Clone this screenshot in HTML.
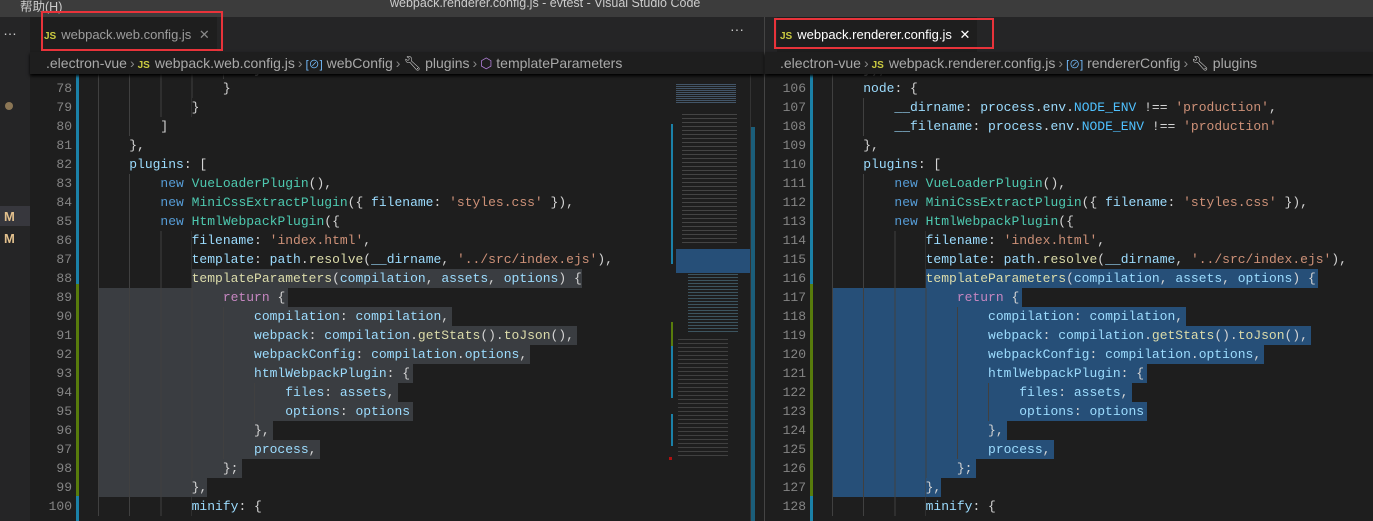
<!DOCTYPE html>
<html><head><meta charset="utf-8">
<style>
*{margin:0;padding:0;box-sizing:border-box}
body{width:1373px;height:521px;overflow:hidden;background:#1e1e1e;position:relative;font-family:"Liberation Sans","Noto Sans CJK SC",sans-serif}
.abs{position:absolute}
#title{left:0;top:0;width:1373px;height:17px;background:#3c3c3c;color:#ccc;font-size:12.5px;overflow:hidden}
#title span{position:absolute;top:-4px}
.tabrow{top:17px;height:35px;background:#252526}
.bc{top:52px;height:22px;background:#1e1e1e;color:#a9a9a9;font-size:14px;line-height:22px;white-space:nowrap;box-shadow:0 2px 3px #000;z-index:5}
.bc .js,.tab .js{color:#cbcb41;font-weight:bold;font-size:10px;margin-right:5px}
.tab{top:0;height:35px;line-height:35px;font-size:13px;white-space:nowrap;background:#1e1e1e}
.red{border:2px solid #e8333a;z-index:6}
.code{top:60px;font-family:"Liberation Mono",monospace;font-size:13px;color:#d4d4d4;z-index:1}
.l{height:19px;line-height:19px;position:relative;white-space:pre}
.ln{position:absolute;width:40px;text-align:right;color:#858585}
.g{position:absolute;top:0;height:19px;background:repeating-linear-gradient(to right,#404040 0 1px,transparent 1px 4ch)}
.s{position:absolute;top:0;height:19px}
.t{position:absolute;top:0}
.p{color:#9cdcfe}.f{color:#dcdcaa}.c{color:#4ec9b0}.st{color:#ce9178}.k{color:#569cd6}.r{color:#c586c0}.n{color:#4fc1ff}
.sep{color:#888;margin:0 3px}
</style></head><body>
<div id="title" class="abs"><span style="left:20px">帮助(H)</span><span style="left:390px">webpack.renderer.config.js - evtest - Visual Studio Code</span></div>

<div class="abs" style="left:0;top:17px;width:30px;height:504px;background:#252526"></div>
<div class="abs" style="left:3px;top:22px;color:#ccc;font-size:14px">…</div>
<div class="abs" style="left:5px;top:102px;width:8px;height:8px;border-radius:50%;background:#8b7655"></div>
<div class="abs" style="left:0;top:206px;width:30px;height:20px;background:#37373d"></div>
<div class="abs" style="left:4px;top:209px;color:#e2c08d;font-size:13px;font-weight:bold">M</div>
<div class="abs" style="left:4px;top:231px;color:#e2c08d;font-size:13px;font-weight:bold">M</div>

<div class="abs tabrow" style="left:30px;width:734px">
  <div class="abs tab" style="left:0;width:187px;padding-left:14px;color:#9d9d9d"><span class="js">JS</span>webpack.web.config.js <span style="margin-left:4px;color:#8a8a8a">✕</span></div>
  <div class="abs" style="left:700px;top:4px;color:#ccc;font-size:14px">···</div>
</div>
<div class="abs red" style="left:41px;top:11px;width:182px;height:40px"></div>
<div class="abs bc" style="left:30px;width:734px;padding-left:16px">.electron-vue<span class="sep">›</span><span class="js">JS</span>webpack.web.config.js<span class="sep">›</span><span style="color:#75beff;font-size:11px">[⊘]</span> webConfig<span class="sep">›</span><span style="color:#ccc">🔧︎</span> plugins<span class="sep">›</span><span style="color:#b180d7">⬡</span> templateParameters</div>

<div class="abs" style="left:76px;top:74px;width:3px;height:210px;background:#1b81a8;z-index:2"></div>
<div class="abs" style="left:76px;top:284px;width:3px;height:212px;background:#587c0c;z-index:2"></div>
<div class="abs" style="left:76px;top:496px;width:3px;height:25px;background:#1b81a8;z-index:2"></div>

<div class="abs code" style="left:0;width:668px;overflow:hidden;height:461px">
<div class="l"><span class="ln" style="left:32px">77</span><div class="g" style="left:98px;width:20ch"></div><span class="t" style="left:98px">                    }</span></div>
<div class="l"><span class="ln" style="left:32px">78</span><div class="g" style="left:98px;width:16ch"></div><span class="t" style="left:98px">                }</span></div>
<div class="l"><span class="ln" style="left:32px">79</span><div class="g" style="left:98px;width:12ch"></div><span class="t" style="left:98px">            }</span></div>
<div class="l"><span class="ln" style="left:32px">80</span><div class="g" style="left:98px;width:8ch"></div><span class="t" style="left:98px">        ]</span></div>
<div class="l"><span class="ln" style="left:32px">81</span><div class="g" style="left:98px;width:4ch"></div><span class="t" style="left:98px">    },</span></div>
<div class="l"><span class="ln" style="left:32px">82</span><div class="g" style="left:98px;width:4ch"></div><span class="t" style="left:98px">    <span class="p">plugins</span>: [</span></div>
<div class="l"><span class="ln" style="left:32px">83</span><div class="g" style="left:98px;width:8ch"></div><span class="t" style="left:98px">        <span class="k">new</span> <span class="c">VueLoaderPlugin</span>(),</span></div>
<div class="l"><span class="ln" style="left:32px">84</span><div class="g" style="left:98px;width:8ch"></div><span class="t" style="left:98px">        <span class="k">new</span> <span class="c">MiniCssExtractPlugin</span>({ <span class="p">filename</span>: <span class="st">'styles.css'</span> }),</span></div>
<div class="l"><span class="ln" style="left:32px">85</span><div class="g" style="left:98px;width:8ch"></div><span class="t" style="left:98px">        <span class="k">new</span> <span class="c">HtmlWebpackPlugin</span>({</span></div>
<div class="l"><span class="ln" style="left:32px">86</span><div class="g" style="left:98px;width:12ch"></div><span class="t" style="left:98px">            <span class="p">filename</span>: <span class="st">'index.html'</span>,</span></div>
<div class="l"><span class="ln" style="left:32px">87</span><div class="g" style="left:98px;width:12ch"></div><span class="t" style="left:98px">            <span class="p">template</span>: <span class="p">path</span>.<span class="f">resolve</span>(<span class="p">__dirname</span>, <span class="st">'../src/index.ejs'</span>),</span></div>
<div class="l"><span class="ln" style="left:32px">88</span><div class="g" style="left:98px;width:12ch"></div><div class="s" style="left:calc(98px + 12ch);width:50ch;background:#3a3d41"></div><span class="t" style="left:98px">            <span class="f">templateParameters</span>(<span class="p">compilation</span>, <span class="p">assets</span>, <span class="p">options</span>) {</span></div>
<div class="l"><span class="ln" style="left:32px">89</span><div class="s" style="left:98px;width:24.4ch;background:#3a3d41"></div><div class="g" style="left:98px;width:16ch"></div><span class="t" style="left:98px">                <span class="r">return</span> {</span></div>
<div class="l"><span class="ln" style="left:32px">90</span><div class="s" style="left:98px;width:45.4ch;background:#3a3d41"></div><div class="g" style="left:98px;width:20ch"></div><span class="t" style="left:98px">                    <span class="p">compilation</span>: <span class="p">compilation</span>,</span></div>
<div class="l"><span class="ln" style="left:32px">91</span><div class="s" style="left:98px;width:61.4ch;background:#3a3d41"></div><div class="g" style="left:98px;width:20ch"></div><span class="t" style="left:98px">                    <span class="p">webpack</span>: <span class="p">compilation</span>.<span class="f">getStats</span>().<span class="f">toJson</span>(),</span></div>
<div class="l"><span class="ln" style="left:32px">92</span><div class="s" style="left:98px;width:55.4ch;background:#3a3d41"></div><div class="g" style="left:98px;width:20ch"></div><span class="t" style="left:98px">                    <span class="p">webpackConfig</span>: <span class="p">compilation</span>.<span class="p">options</span>,</span></div>
<div class="l"><span class="ln" style="left:32px">93</span><div class="s" style="left:98px;width:40.4ch;background:#3a3d41"></div><div class="g" style="left:98px;width:20ch"></div><span class="t" style="left:98px">                    <span class="p">htmlWebpackPlugin</span>: {</span></div>
<div class="l"><span class="ln" style="left:32px">94</span><div class="s" style="left:98px;width:38.4ch;background:#3a3d41"></div><div class="g" style="left:98px;width:24ch"></div><span class="t" style="left:98px">                        <span class="p">files</span>: <span class="p">assets</span>,</span></div>
<div class="l"><span class="ln" style="left:32px">95</span><div class="s" style="left:98px;width:40.4ch;background:#3a3d41"></div><div class="g" style="left:98px;width:24ch"></div><span class="t" style="left:98px">                        <span class="p">options</span>: <span class="p">options</span></span></div>
<div class="l"><span class="ln" style="left:32px">96</span><div class="s" style="left:98px;width:22.4ch;background:#3a3d41"></div><div class="g" style="left:98px;width:20ch"></div><span class="t" style="left:98px">                    },</span></div>
<div class="l"><span class="ln" style="left:32px">97</span><div class="s" style="left:98px;width:28.4ch;background:#3a3d41"></div><div class="g" style="left:98px;width:20ch"></div><span class="t" style="left:98px">                    <span class="p">process</span>,</span></div>
<div class="l"><span class="ln" style="left:32px">98</span><div class="s" style="left:98px;width:18.4ch;background:#3a3d41"></div><div class="g" style="left:98px;width:16ch"></div><span class="t" style="left:98px">                };</span></div>
<div class="l"><span class="ln" style="left:32px">99</span><div class="s" style="left:98px;width:14ch;background:#3a3d41"></div><div class="g" style="left:98px;width:12ch"></div><span class="t" style="left:98px">            },</span></div>
<div class="l"><span class="ln" style="left:32px">100</span><div class="g" style="left:98px;width:12ch"></div><span class="t" style="left:98px">            <span class="p">minify</span>: {</span></div>
</div>

<div class="abs" style="left:668px;top:74px;width:82px;height:447px;background:#1e1e1e;overflow:hidden">
  <div class="abs" style="left:3px;top:50px;width:2px;height:140px;background:#1b81a8"></div>
  <div class="abs" style="left:3px;top:248px;width:2px;height:24px;background:#587c0c"></div>
  <div class="abs" style="left:3px;top:272px;width:2px;height:52px;background:#1b81a8"></div>
  <div class="abs" style="left:3px;top:340px;width:2px;height:32px;background:#1b81a8"></div>
  <div class="abs" style="left:1px;top:383px;width:3px;height:3px;background:#b01010"></div>
  <div class="abs" style="left:8px;top:175px;width:74px;height:24px;background:#264f78"></div>
  <div class="abs" style="left:8px;top:10px;width:60px;height:20px;background:repeating-linear-gradient(#5a7a9a 0 1px,transparent 1px 2px);opacity:.6"></div>
  <div class="abs" style="left:14px;top:40px;width:55px;height:130px;background:repeating-linear-gradient(#6a6a6a 0 1px,transparent 1px 4px);opacity:.5"></div>
  <div class="abs" style="left:20px;top:200px;width:50px;height:60px;background:repeating-linear-gradient(#5a8aa0 0 1px,transparent 1px 3px);opacity:.5"></div>
  <div class="abs" style="left:10px;top:265px;width:50px;height:120px;background:repeating-linear-gradient(#6a6a6a 0 1px,transparent 1px 4px);opacity:.45"></div>
</div>
<div class="abs" style="left:750px;top:74px;width:14px;height:447px;background:#1e1e1e;border-left:1px solid #333"></div>
<div class="abs" style="left:751px;top:127px;width:4px;height:394px;background:#1b5e7a"></div>
<div class="abs" style="left:764px;top:17px;width:1px;height:504px;background:#444"></div>

<div class="abs tabrow" style="left:765px;width:608px">
  <div class="abs tab" style="left:12px;width:200px;padding-left:3px;color:#fff"><span class="js">JS</span>webpack.renderer.config.js <span style="margin-left:4px">✕</span></div>
</div>
<div class="abs red" style="left:774px;top:18px;width:220px;height:31px"></div>
<div class="abs bc" style="left:765px;width:608px;padding-left:15px">.electron-vue<span class="sep">›</span><span class="js">JS</span>webpack.renderer.config.js<span class="sep">›</span><span style="color:#75beff;font-size:11px">[⊘]</span> rendererConfig<span class="sep">›</span><span style="color:#ccc">🔧︎</span> plugins</div>

<div class="abs" style="left:810px;top:74px;width:3px;height:210px;background:#1b81a8;z-index:2"></div>
<div class="abs" style="left:810px;top:284px;width:3px;height:212px;background:#587c0c;z-index:2"></div>
<div class="abs" style="left:810px;top:496px;width:3px;height:25px;background:#1b81a8;z-index:2"></div>

<div class="abs code" style="left:734px;width:639px;height:461px;overflow:hidden">
<div class="l"><span class="ln" style="left:32px">105</span><div class="g" style="left:98px;width:4ch"></div><span class="t" style="left:98px">    }),</span></div>
<div class="l"><span class="ln" style="left:32px">106</span><div class="g" style="left:98px;width:4ch"></div><span class="t" style="left:98px">    <span class="p">node</span>: {</span></div>
<div class="l"><span class="ln" style="left:32px">107</span><div class="g" style="left:98px;width:8ch"></div><span class="t" style="left:98px">        <span class="p">__dirname</span>: <span class="p">process</span>.<span class="p">env</span>.<span class="n">NODE_ENV</span> !== <span class="st">'production'</span>,</span></div>
<div class="l"><span class="ln" style="left:32px">108</span><div class="g" style="left:98px;width:8ch"></div><span class="t" style="left:98px">        <span class="p">__filename</span>: <span class="p">process</span>.<span class="p">env</span>.<span class="n">NODE_ENV</span> !== <span class="st">'production'</span></span></div>
<div class="l"><span class="ln" style="left:32px">109</span><div class="g" style="left:98px;width:4ch"></div><span class="t" style="left:98px">    },</span></div>
<div class="l"><span class="ln" style="left:32px">110</span><div class="g" style="left:98px;width:4ch"></div><span class="t" style="left:98px">    <span class="p">plugins</span>: [</span></div>
<div class="l"><span class="ln" style="left:32px">111</span><div class="g" style="left:98px;width:8ch"></div><span class="t" style="left:98px">        <span class="k">new</span> <span class="c">VueLoaderPlugin</span>(),</span></div>
<div class="l"><span class="ln" style="left:32px">112</span><div class="g" style="left:98px;width:8ch"></div><span class="t" style="left:98px">        <span class="k">new</span> <span class="c">MiniCssExtractPlugin</span>({ <span class="p">filename</span>: <span class="st">'styles.css'</span> }),</span></div>
<div class="l"><span class="ln" style="left:32px">113</span><div class="g" style="left:98px;width:8ch"></div><span class="t" style="left:98px">        <span class="k">new</span> <span class="c">HtmlWebpackPlugin</span>({</span></div>
<div class="l"><span class="ln" style="left:32px">114</span><div class="g" style="left:98px;width:12ch"></div><span class="t" style="left:98px">            <span class="p">filename</span>: <span class="st">'index.html'</span>,</span></div>
<div class="l"><span class="ln" style="left:32px">115</span><div class="g" style="left:98px;width:12ch"></div><span class="t" style="left:98px">            <span class="p">template</span>: <span class="p">path</span>.<span class="f">resolve</span>(<span class="p">__dirname</span>, <span class="st">'../src/index.ejs'</span>),</span></div>
<div class="l"><span class="ln" style="left:32px">116</span><div class="g" style="left:98px;width:12ch"></div><div class="s" style="left:calc(98px + 12ch);width:50.3ch;background:#264f78"></div><span class="t" style="left:98px">            <span class="f">templateParameters</span>(<span class="p">compilation</span>, <span class="p">assets</span>, <span class="p">options</span>) {</span></div>
<div class="l"><span class="ln" style="left:32px">117</span><div class="s" style="left:98px;width:24.4ch;background:#264f78"></div><div class="g" style="left:98px;width:16ch"></div><span class="t" style="left:98px">                <span class="r">return</span> {</span></div>
<div class="l"><span class="ln" style="left:32px">118</span><div class="s" style="left:98px;width:45.4ch;background:#264f78"></div><div class="g" style="left:98px;width:20ch"></div><span class="t" style="left:98px">                    <span class="p">compilation</span>: <span class="p">compilation</span>,</span></div>
<div class="l"><span class="ln" style="left:32px">119</span><div class="s" style="left:98px;width:61.4ch;background:#264f78"></div><div class="g" style="left:98px;width:20ch"></div><span class="t" style="left:98px">                    <span class="p">webpack</span>: <span class="p">compilation</span>.<span class="f">getStats</span>().<span class="f">toJson</span>(),</span></div>
<div class="l"><span class="ln" style="left:32px">120</span><div class="s" style="left:98px;width:55.4ch;background:#264f78"></div><div class="g" style="left:98px;width:20ch"></div><span class="t" style="left:98px">                    <span class="p">webpackConfig</span>: <span class="p">compilation</span>.<span class="p">options</span>,</span></div>
<div class="l"><span class="ln" style="left:32px">121</span><div class="s" style="left:98px;width:40.4ch;background:#264f78"></div><div class="g" style="left:98px;width:20ch"></div><span class="t" style="left:98px">                    <span class="p">htmlWebpackPlugin</span>: {</span></div>
<div class="l"><span class="ln" style="left:32px">122</span><div class="s" style="left:98px;width:38.4ch;background:#264f78"></div><div class="g" style="left:98px;width:24ch"></div><span class="t" style="left:98px">                        <span class="p">files</span>: <span class="p">assets</span>,</span></div>
<div class="l"><span class="ln" style="left:32px">123</span><div class="s" style="left:98px;width:40.4ch;background:#264f78"></div><div class="g" style="left:98px;width:24ch"></div><span class="t" style="left:98px">                        <span class="p">options</span>: <span class="p">options</span></span></div>
<div class="l"><span class="ln" style="left:32px">124</span><div class="s" style="left:98px;width:22.4ch;background:#264f78"></div><div class="g" style="left:98px;width:20ch"></div><span class="t" style="left:98px">                    },</span></div>
<div class="l"><span class="ln" style="left:32px">125</span><div class="s" style="left:98px;width:28.4ch;background:#264f78"></div><div class="g" style="left:98px;width:20ch"></div><span class="t" style="left:98px">                    <span class="p">process</span>,</span></div>
<div class="l"><span class="ln" style="left:32px">126</span><div class="s" style="left:98px;width:18.4ch;background:#264f78"></div><div class="g" style="left:98px;width:16ch"></div><span class="t" style="left:98px">                };</span></div>
<div class="l"><span class="ln" style="left:32px">127</span><div class="s" style="left:98px;width:14ch;background:#264f78"></div><div class="g" style="left:98px;width:12ch"></div><span class="t" style="left:98px">            },</span></div>
<div class="l"><span class="ln" style="left:32px">128</span><div class="g" style="left:98px;width:12ch"></div><span class="t" style="left:98px">            <span class="p">minify</span>: {</span></div>
</div>
</body></html>
